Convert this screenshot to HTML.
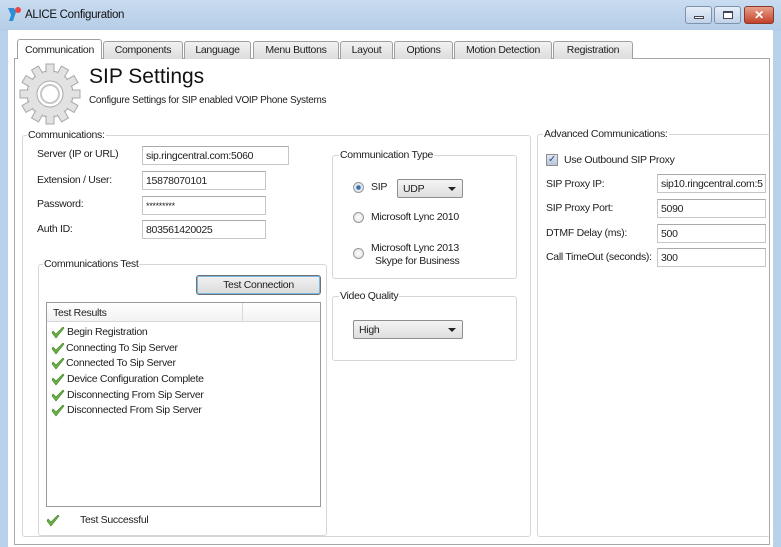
<!DOCTYPE html>
<html><head><style>
*{margin:0;padding:0;box-sizing:border-box}
body{width:781px;height:547px;overflow:hidden;position:relative;background:#b9d1ea;font-family:"Liberation Sans",sans-serif;font-size:10.5px;color:#1e1e1e;letter-spacing:-0.3px}
.a{position:absolute;white-space:nowrap}
.title{left:0;top:0;width:781px;height:31px;background:linear-gradient(#c9dcf0,#b4cde6)}
.client{left:8px;top:30px;width:765px;height:517px;background:#fff}
.tab{position:absolute;top:41px;height:18px;border:1px solid #a0a0a0;border-bottom:none;background:linear-gradient(#f2f2f2,#dcdcdc);text-align:center;line-height:16px;border-radius:3px 3px 0 0}
.tab.sel{background:#fff;top:39px;height:20px;line-height:20px;z-index:2}
.page{left:14px;top:58px;width:756px;height:487px;border:1px solid #a8a8a8;background:#fff}
.grp{position:absolute;border:1px solid #d6d6d6;border-radius:3px}
.lbl{position:absolute;background:#fff;padding:0 1px;line-height:12px}
.tb{position:absolute;border:1px solid #c6c6c6;border-top-color:#aaa;background:#fff;height:19px;line-height:18px;padding-left:3px;overflow:hidden}
.dd{position:absolute;border:1px solid #8e8e8e;border-radius:2px;background:linear-gradient(#f4f4f4,#dedede);height:19px;line-height:18px;padding-left:5px}
.dd:after{content:"";position:absolute;right:6px;top:7px;border:4px solid transparent;border-top:4px solid #222;border-bottom:none}
.rad{position:absolute;width:11px;height:11px;border-radius:50%;border:1px solid #9a9a9a;background:radial-gradient(#fff,#ddd)}
</style></head><body>
<div class="a title"></div>
<svg class="a" style="left:6px;top:6px" width="16" height="16"><path d="M2 2h6l2 4-3 9H3l2-6z" fill="#2a8fd6"/><circle cx="12" cy="4" r="3" fill="#e44"/></svg>
<div class="a" style="left:25px;top:9px;font-size:11.5px;color:#111">ALICE Configuration</div>
<div class="a" style="left:685px;top:6px;width:27px;height:18px;border:1px solid #7d93b0;border-radius:3px;background:linear-gradient(#e6eef8,#c2d3e8)"><div style="position:absolute;left:8px;top:9px;width:10px;height:3px;background:#fff;border:1px solid #445"></div></div>
<div class="a" style="left:714px;top:6px;width:27px;height:18px;border:1px solid #7d93b0;border-radius:3px;background:linear-gradient(#e6eef8,#c2d3e8)"><div style="position:absolute;left:8px;top:4px;width:10px;height:8px;background:#fff;border:1px solid #445;border-top-width:2px"></div></div>
<div class="a" style="left:744px;top:6px;width:30px;height:18px;border:1px solid #8a3a2a;border-radius:3px;background:linear-gradient(#e8a08a,#c4402a);color:#fff;font-weight:bold;text-align:center;line-height:16px;font-size:12px">✕</div>
<div class="a client"></div>

<div class="a page"></div>
<div class="tab sel" style="left:17px;width:85px">Communication</div>
<div class="tab" style="left:103px;width:80px">Components</div>
<div class="tab" style="left:184px;width:67px">Language</div>
<div class="tab" style="left:253px;width:86px">Menu Buttons</div>
<div class="tab" style="left:340px;width:53px">Layout</div>
<div class="tab" style="left:394px;width:59px">Options</div>
<div class="tab" style="left:454px;width:98px">Motion Detection</div>
<div class="tab" style="left:553px;width:80px">Registration</div>

<svg class="a" style="left:19px;top:63px" width="62" height="62" viewBox="0 0 62 62">
<g transform="translate(31 31)" fill="#e2e2e2" stroke="#a8a8a8" stroke-width="1">
<circle r="23"/>
<g id="t"><rect x="-4" y="-30" width="8" height="9"/></g>
<use href="#t" transform="rotate(30)"/><use href="#t" transform="rotate(60)"/><use href="#t" transform="rotate(90)"/><use href="#t" transform="rotate(120)"/><use href="#t" transform="rotate(150)"/><use href="#t" transform="rotate(180)"/><use href="#t" transform="rotate(210)"/><use href="#t" transform="rotate(240)"/><use href="#t" transform="rotate(270)"/><use href="#t" transform="rotate(300)"/><use href="#t" transform="rotate(330)"/>
<circle r="22" stroke="none"/>
<circle r="13" fill="#fff"/>
<circle r="9" fill="none" stroke="#c8c8c8" stroke-width="2"/>
</g>
</svg>
<div class="a" style="left:89px;top:65px;font-size:21px;color:#111;letter-spacing:0">SIP Settings</div>
<div class="a" style="left:89px;top:95px;font-size:10px">Configure Settings for SIP enabled VOIP Phone Systems</div>

<div class="grp" style="left:22px;top:135px;width:509px;height:402px"></div>
<div class="lbl" style="left:27px;top:129px">Communications:</div>
<div class="a" style="left:37px;top:148px">Server (IP or URL)</div>
<div class="tb" style="left:142px;top:146px;width:147px">sip.ringcentral.com:5060</div>
<div class="a" style="left:37px;top:174px">Extension / User:</div>
<div class="tb" style="left:142px;top:171px;width:124px">15878070101</div>
<div class="a" style="left:37px;top:198px">Password:</div>
<div class="tb" style="left:142px;top:196px;width:124px;font-size:9px">*********</div>
<div class="a" style="left:37px;top:223px">Auth ID:</div>
<div class="tb" style="left:142px;top:220px;width:124px">803561420025</div>

<div class="grp" style="left:38px;top:264px;width:289px;height:272px"></div>
<div class="lbl" style="left:43px;top:258px">Communications Test</div>
<div class="a" style="left:196px;top:275px;width:125px;height:20px;border:1px solid #707070;border-radius:3px;background:linear-gradient(#f2f2f2,#dbdbdb);text-align:center;line-height:18px;box-shadow:0 0 0 1px #7ab8e0 inset">Test Connection</div>
<div class="a" style="left:46px;top:302px;width:275px;height:205px;border:1px solid #9a9a9a;background:#fff"></div>
<div class="a" style="left:47px;top:303px;width:273px;height:19px;border-bottom:1px solid #d8d8d8;background:linear-gradient(#fff,#f2f2f2)"></div>
<div class="a" style="left:242px;top:303px;width:1px;height:19px;background:#d8d8d8"></div>
<div class="a" style="left:53px;top:307px">Test Results</div>
<svg width="0" height="0" style="position:absolute"><defs><symbol id="chk" viewBox="0 0 14 12"><path d="M1 6l4 5 8-10-1-1-7 7-3-3z" fill="#6cb048" stroke="#3d7f22" stroke-width=".6"/></symbol></defs></svg>
<svg class="a" style="left:51px;top:327px" width="14" height="12"><use href="#chk"/></svg><div class="a" style="left:67px;top:326px">Begin Registration</div>
<svg class="a" style="left:51px;top:343px" width="14" height="12"><use href="#chk"/></svg><div class="a" style="left:66px;top:342px">Connecting To Sip Server</div>
<svg class="a" style="left:51px;top:358px" width="14" height="12"><use href="#chk"/></svg><div class="a" style="left:66px;top:357px">Connected To Sip Server</div>
<svg class="a" style="left:51px;top:374px" width="14" height="12"><use href="#chk"/></svg><div class="a" style="left:67px;top:373px">Device Configuration Complete</div>
<svg class="a" style="left:51px;top:390px" width="14" height="12"><use href="#chk"/></svg><div class="a" style="left:67px;top:389px">Disconnecting From Sip Server</div>
<svg class="a" style="left:51px;top:405px" width="14" height="12"><use href="#chk"/></svg><div class="a" style="left:67px;top:404px">Disconnected From Sip Server</div>
<svg class="a" style="left:46px;top:515px" width="14" height="12"><use href="#chk"/></svg><div class="a" style="left:80px;top:514px">Test Successful</div>

<div class="grp" style="left:332px;top:155px;width:185px;height:124px"></div>
<div class="lbl" style="left:339px;top:149px">Communication Type</div>
<div class="rad" style="left:353px;top:182px;background:radial-gradient(#3a6ea8 30%,#dfe8f2 40%)"></div>
<div class="a" style="left:371px;top:181px">SIP</div>
<div class="dd" style="left:397px;top:179px;width:66px">UDP</div>
<div class="rad" style="left:353px;top:212px"></div>
<div class="a" style="left:371px;top:211px">Microsoft Lync 2010</div>
<div class="rad" style="left:353px;top:248px"></div>
<div class="a" style="left:371px;top:242px">Microsoft Lync 2013</div>
<div class="a" style="left:375px;top:255px">Skype for Business</div>

<div class="grp" style="left:332px;top:296px;width:185px;height:65px"></div>
<div class="lbl" style="left:339px;top:290px">Video Quality</div>
<div class="dd" style="left:353px;top:320px;width:110px">High</div>

<div class="grp" style="left:537px;top:134px;width:233px;height:403px;border-right:none"></div>
<div class="lbl" style="left:543px;top:128px">Advanced Communications:</div>
<div class="a" style="left:546px;top:154px;width:12px;height:12px;border:1px solid #8e8e8e;background:linear-gradient(#dfe6f0,#b9c6d8);text-align:center;line-height:10px;font-size:10px;color:#2b4a8a">✓</div>
<div class="a" style="left:564px;top:154px">Use Outbound SIP Proxy</div>
<div class="a" style="left:546px;top:178px">SIP Proxy IP:</div>
<div class="tb" style="left:657px;top:174px;width:109px">sip10.ringcentral.com:5</div>
<div class="a" style="left:546px;top:202px">SIP Proxy Port:</div>
<div class="tb" style="left:657px;top:199px;width:109px">5090</div>
<div class="a" style="left:546px;top:227px">DTMF Delay (ms):</div>
<div class="tb" style="left:657px;top:224px;width:109px">500</div>
<div class="a" style="left:546px;top:251px">Call TimeOut (seconds):</div>
<div class="tb" style="left:657px;top:248px;width:109px">300</div>
</body></html>
